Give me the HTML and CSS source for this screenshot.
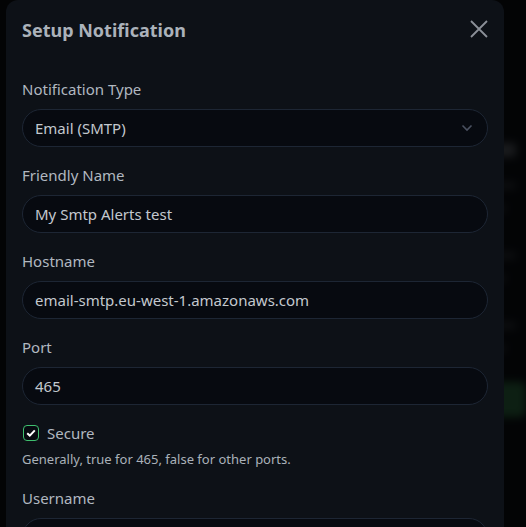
FILE: index.html
```html
<!DOCTYPE html>
<html lang="en">
<head>
    <meta charset="UTF-8">
    <meta name="viewport" content="width=device-width, initial-scale=1.0">
    <title>Setup Notification</title>
    <link rel="stylesheet" href="styles.css">
</head>
<body>

<div class="page">
    <div class="page-col">
        <div class="blur-line title-line"></div>
        <div class="blur-line first"></div>
        <div class="blur-line short"></div>
        <div class="blur-line group"></div>
        <div class="blur-line short"></div>
        <div class="blur-line group"></div>
        <div class="blur-line short"></div>
        <div class="blur-btn"></div>
    </div>
</div>

<div class="backdrop"></div>

<div class="modal">
    <div class="modal-header">
        <h5 class="modal-title">Setup Notification</h5>
        <button class="btn-close" aria-label="Close">
            <svg width="18" height="18" viewBox="0 0 18 18">
                <path d="M1 1 L17 17 M17 1 L1 17" stroke="#8b9098" stroke-width="1.8" fill="none"/>
            </svg>
        </button>
    </div>
    <div class="modal-body">
        <div class="field">
            <label class="form-label">Notification Type</label>
            <div class="form-select">
                <span>Email (SMTP)</span>
                <svg class="chevron" width="12" height="8" viewBox="0 0 12 8">
                    <path d="M1.5 1.5 L6 6 L10.5 1.5" stroke="#4a5160" stroke-width="1.6" fill="none"/>
                </svg>
            </div>
        </div>
        <div class="field">
            <label class="form-label">Friendly Name</label>
            <div class="form-control">My Smtp Alerts test</div>
        </div>
        <div class="field">
            <label class="form-label">Hostname</label>
            <div class="form-control">email-smtp.eu-west-1.amazonaws.com</div>
        </div>
        <div class="field">
            <label class="form-label">Port</label>
            <div class="form-control">465</div>
        </div>
        <div class="field">
            <div class="form-check">
                <span class="check-box">
                    <svg width="10" height="8" viewBox="0 0 10 8">
                        <path d="M1.2 4.2 L3.8 6.6 L8.8 1.4" stroke="#ffffff" stroke-width="2" fill="none"/>
                    </svg>
                </span>
                <span>Secure</span>
            </div>
            <div class="form-text">Generally, true for 465, false for other ports.</div>
        </div>
        <div class="field">
            <label class="form-label">Username</label>
            <div class="form-control"></div>
        </div>
    </div>
</div>

</body>
</html>
```

FILE: styles.css
```css
body {
    margin: 0;
    height: 527px;
    overflow: hidden;
    background-color: #0d1117;
    font-family: "Noto Sans", "Open Sans", sans-serif;
    color: #b1b8c0;
}

.page {
    display: flex;
    justify-content: flex-end;
    padding-top: 143px;
}

.page-col {
    width: 60px;
    display: flex;
    flex-direction: column;
    filter: blur(4px);
}

.blur-line {
    height: 7px;
    width: 50px;
    margin-top: 16px;
    background-color: #3b4047;
}

.blur-line.title-line {
    margin-top: 0;
    height: 14px;
    background-color: #666c75;
}

.blur-line.first {
    margin-top: 25px;
}

.blur-line.short {
    width: 40px;
}

.blur-line.group {
    margin-top: 40px;
}

.blur-btn {
    margin-top: 30px;
    height: 35px;
    width: 60px;
    border-radius: 6px;
    background-color: #357d4c;
}

.backdrop {
    position: fixed;
    inset: 0;
    background-color: rgba(0, 0, 0, 0.75);
}

.modal {
    position: fixed;
    top: 0;
    left: 6px;
    width: 498px;
    height: 600px;
    background-color: #0d1117;
    border-radius: 12px;
}

.modal-header {
    display: flex;
    align-items: center;
    justify-content: space-between;
    padding: 15px 16px 16px;
}

.modal-title {
    margin: 0;
    font-size: 18px;
    font-weight: 700;
    line-height: 30px;
    color: #abb2ba;
}

.btn-close {
    background: none;
    border: none;
    padding: 0;
    width: 18px;
    height: 18px;
    margin-top: -2px;
    cursor: pointer;
}

.modal-body {
    padding: 16px;
}

.field {
    margin-bottom: 16px;
}

.form-label {
    display: block;
    font-size: 15px;
    line-height: 24px;
    margin-bottom: 8px;
}

.form-control,
.form-select {
    box-sizing: border-box;
    height: 38px;
    padding: 0 12px;
    display: flex;
    align-items: center;
    justify-content: space-between;
    background-color: #070a10;
    border: 1px solid #1d2634;
    border-radius: 19px;
    font-size: 15px;
    color: #c3c8ce;
}

.chevron {
    margin-right: 2px;
}

.form-check {
    display: flex;
    align-items: center;
    gap: 8px;
    font-size: 15px;
    line-height: 24px;
    padding-left: 1px;
}

.check-box {
    box-sizing: border-box;
    width: 16px;
    height: 16px;
    border: 1px solid #3fbf6f;
    border-radius: 4px;
    background-color: #070a10;
    display: flex;
    align-items: center;
    justify-content: center;
}

.form-text {
    margin-top: 4px;
    font-size: 13px;
    line-height: 21px;
    color: #aab1b9;
}
```
